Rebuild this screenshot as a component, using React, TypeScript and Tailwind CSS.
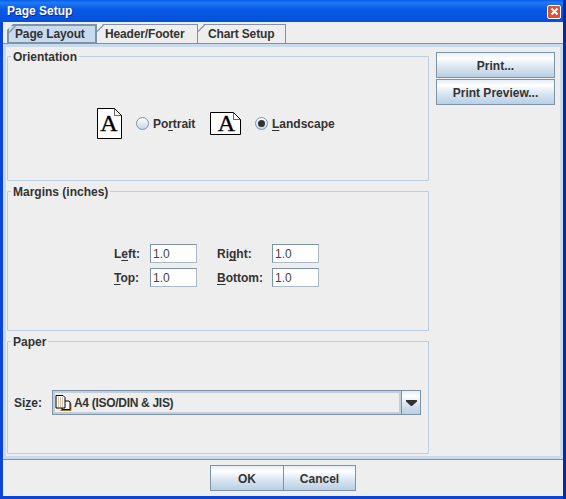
import React from "react";

const grad = "bg-[linear-gradient(180deg,#e6edf5_0%,#ffffff_22%,#dce7f2_55%,#b8cfe5_100%)]";

function U({ children }: { children: React.ReactNode }) {
  return <span className="underline underline-offset-[2px] decoration-1">{children}</span>;
}

function Tab({ label, active, box }: { label: string; active?: boolean; box: string }) {
  return (
    <div className={`${box} relative flex items-center tracking-[-0.15px] border-[#7d93a8] [clip-path:polygon(6px_0,100%_0,100%_100%,0_100%,0_6px)] ${active ? "h-[20px] -mb-[1px] z-10 bg-[#c8daed] border-2" : "h-[19px] bg-[#eeeeee] border-t border-r"}`}>
      <span>{label}</span>
      <svg className="absolute left-0 top-0" width="7" height="7"><line x1="0" y1="6.5" x2="6.5" y2="0" stroke="#7d93a8" strokeWidth="1.2" /></svg>
    </div>
  );
}

function Group({ title, h, children }: { title: string; h: string; children: React.ReactNode }) {
  return (
    <div className={`${h} relative border border-[#bccde0] rounded-[1px]`}>
      <span className="absolute left-[3px] top-[-7px] bg-[#eeeeee] px-[2px] leading-[15px]">{title}</span>
      {children}
    </div>
  );
}

function PageIcon({ wide }: { wide?: boolean }) {
  const w = wide ? 31 : 25;
  const h = wide ? 23 : 31;
  return (
    <svg width={w} height={h} viewBox={`0 0 ${w} ${h}`} className="block shrink-0 overflow-visible">
      <path d={`M0.5 0.5H${w - 7.5}L${w - 0.5} 7.5V${h - 0.5}H0.5Z`} fill="#fff" stroke="#000" />
      <path d={`M${w - 7.5} 0.5V7.5H${w - 0.5}`} fill="none" stroke="#000" strokeWidth="0.6" />
      <text x={wide ? 16.5 : 12} y={wide ? 19 : 23} textAnchor="middle" fontFamily="'Liberation Serif', serif" fontWeight="400" fontSize="24" fill="#000" stroke="#000" strokeWidth="0.35">A</text>
    </svg>
  );
}

function Radio({ checked }: { checked?: boolean }) {
  return (
    <span className="w-[13px] h-[13px] shrink-0 rounded-full border border-[#7d93a8] bg-[linear-gradient(180deg,#ffffff,#c4d6e8)] flex items-center justify-center">
      {checked && <span className="w-[7px] h-[7px] rounded-full bg-[#333333]" />}
    </span>
  );
}

function Field() {
  return (
    <div className="w-[47px] h-[19px] bg-white border border-[#7d93a8] border-b-[#a9b9c9] border-r-[#a9b9c9] pl-[2px] pt-[1px] flex items-center font-normal text-[#444444]">1.0</div>
  );
}

function Btn({ className, children }: { className: string; children: React.ReactNode }) {
  return (
    <div className={`${className} ${grad} border border-[#7d93a8] flex items-center justify-center pt-[1px]`}>{children}</div>
  );
}

export default function App() {
  return (
    <div className="w-[566px] h-[499px] flex flex-col overflow-hidden bg-[#0a45d8] font-['Liberation_Sans',sans-serif] font-bold text-[12px] text-[#333333] border-r-[3px] border-r-[#0a2a9c]">
      <div className="h-[22px] shrink-0 flex items-center justify-between pl-[7px] pr-[2px] bg-[linear-gradient(180deg,#0a5be8_0%,#1f7bf5_12%,#0a5ae6_40%,#0450da_100%)] text-white [text-shadow:1px_1px_0_#0a2a9c]">
        <span>Page Setup</span>
        <span className="w-[14px] h-[14px] mt-[1px] rounded-[2px] bg-[#e0512f] border border-white flex items-center justify-center">
          <svg width="9" height="9" viewBox="0 0 9 9"><path d="M1.5 1.5L7.5 7.5M7.5 1.5L1.5 7.5" stroke="#fff" strokeWidth="2" /></svg>
        </span>
      </div>
      <div className="flex-1 ml-[3px] mb-[3px] flex flex-col bg-[#eeeeee] min-h-0">
        <div className="h-[21px] shrink-0 flex items-end pl-[4px]">
          <Tab label="Page Layout" active box="w-[90px] pl-[6px]" />
          <Tab label="Header/Footer" box="w-[101px] pl-[8px]" />
          <Tab label="Chart Setup" box="w-[88px] pl-[10px]" />
        </div>
        <div className="border-t border-[#7d93a8] shrink-0">
          <div className="h-[415px] border-[3px] border-[#c8daed] flex pl-[1px] pt-[9px] gap-[7px]">
            <div className="w-[422px] flex flex-col gap-[10px]">
              <Group title="Orientation" h="h-[125px]">
                <div className="h-full flex items-center pl-[89px] pt-[10px]">
                  <PageIcon />
                  <span className="ml-[14px]"><Radio /></span>
                  <span className="ml-[4px] w-[43px] tracking-[-0.05px] whitespace-nowrap">Po<U>r</U>trait</span>
                  <span className="ml-[14px]"><PageIcon wide /></span>
                  <span className="ml-[14px]"><Radio checked /></span>
                  <span className="ml-[4px]"><U>L</U>andscape</span>
                </div>
              </Group>
              <Group title="Margins (inches)" h="h-[140px]">
                <div className="pt-[52px] pl-[106px] grid grid-cols-[36px_47px_20px_55px_47px] grid-rows-[19px_19px] gap-y-[5px] items-center">
                  <span className="pt-[1px]">L<U>e</U>ft:</span>
                  <Field />
                  <span />
                  <span className="pt-[1px]">Ri<U>g</U>ht:</span>
                  <Field />
                  <span className="pt-[1px]"><U>T</U>op:</span>
                  <Field />
                  <span />
                  <span className="pt-[1px]"><U>B</U>ottom:</span>
                  <Field />
                </div>
              </Group>
              <Group title="Paper" h="h-[113px]">
                <div className="pt-[48px] pl-[6px] flex items-center">
                  <span className="w-[38px]">Si<U>z</U>e:</span>
                  <div className="w-[369px] h-[25px] flex border border-[#7d93a8]">
                    <div className="flex-1 flex items-center border-2 border-[#c3ced9]">
                      <svg width="17" height="16" viewBox="0 0 17 16" className="mr-[2px] shrink-0">
                        <path d="M9 8.5h7V15.5H5.500" fill="#c99a5b" stroke="#a8722c" />
                        <path d="M8 6h6l1 1v7.500H7V6Z" fill="#fff" stroke="#000" />
                        <path d="M1 0.500h7l2 2v10.500h-9Z" fill="#fff" stroke="#000" />
                        <path d="M3 3h5M3 5h5M3 7h5M3 9h5M3 11h5" stroke="#b98a4a" strokeDasharray="1 1" />
                      </svg>
                      <span className="tracking-[-0.3px] pt-[1px]">A4 (ISO/DIN &amp; JIS)</span>
                    </div>
                    <div className={`w-[19px] ${grad} border-l border-[#7d93a8] flex items-center justify-center`}>
                      <svg width="11" height="6" viewBox="0 0 11 6"><path d="M0 0H11V1.500L6 6H5L0 1.500Z" fill="#333" /></svg>
                    </div>
                  </div>
                </div>
              </Group>
            </div>
            <div className="w-[119px] flex flex-col -mt-[4px]">
              <Btn className="h-[26px]">Print...</Btn>
              <Btn className="h-[26px] mt-[1px]">Print Preview...</Btn>
            </div>
          </div>
        </div>
        <div className="flex-1 border-t border-[#7d93a8] flex justify-center items-start pt-[5px]">
          <Btn className="w-[74px] h-[26px]">OK</Btn>
          <Btn className="w-[72px] h-[26px] border-l-0">Cancel</Btn>
        </div>
      </div>
    </div>
  );
}
